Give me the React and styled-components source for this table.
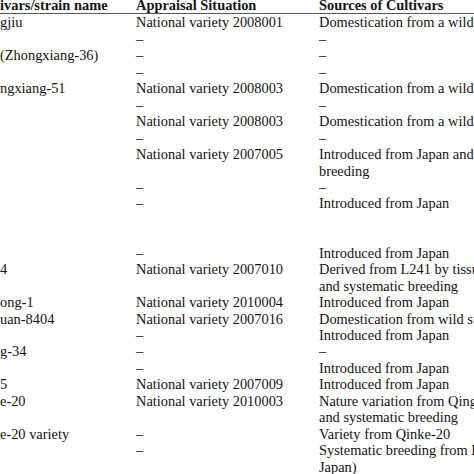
import React from "react";
import styled, { createGlobalStyle } from "styled-components";

const GlobalStyle = createGlobalStyle`
  html, body {
    margin: 0;
    padding: 0;
    background: #ffffff;
    overflow: hidden;
  }
  body {
    width: 474px;
    height: 474px;
  }
`;

const Table = styled.div`
  margin-top: -3px;
  width: 474px;
  overflow: hidden;
  font-family: "Liberation Serif", "Times New Roman", serif;
  font-size: 14.4px;
  line-height: 16.45px;
  color: #141414;
`;

const Row = styled.div`
  display: grid;
  grid-template-columns: 136px 183px 1fr;
  white-space: nowrap;
  border-bottom: ${(props) => (props.head ? "1px solid #5a5a5a" : "none")};
  font-weight: ${(props) => (props.head ? "bold" : "normal")};
`;

const Cell = styled.div`
  min-height: 16.45px;
  overflow: visible;
`;

const Line = styled.div`
  height: 16.45px;
`;

const rows = [
  ["gjiu", "National variety 2008001", ["Domestication from a wild strain"]],
  ["", "–", ["–"]],
  ["(Zhongxiang-36)", "–", ["–"]],
  ["", "–", ["–"]],
  ["ngxiang-51", "National variety 2008003", ["Domestication from a wild strain"]],
  ["", "–", ["–"]],
  ["", "National variety 2008003", ["Domestication from a wild strain"]],
  ["", "–", ["–"]],
  ["", "National variety 2007005", ["Introduced from Japan and", "breeding"]],
  ["", "–", ["–"]],
  ["", "–", ["Introduced from Japan"]],
  ["", "", [""]],
  ["", "", [""]],
  ["", "–", ["Introduced from Japan"]],
  ["4", "National variety 2007010", ["Derived from L241 by tissue", "and systematic breeding"]],
  ["ong-1", "National variety 2010004", ["Introduced from Japan"]],
  ["uan-8404", "National variety 2007016", ["Domestication from wild strain"]],
  ["", "–", ["Introduced from Japan"]],
  ["g-34", "–", ["–"]],
  ["", "–", ["Introduced from Japan"]],
  ["5", "National variety 2007009", ["Introduced from Japan"]],
  ["e-20", "National variety 2010003", ["Nature variation from Qingke", "and systematic breeding"]],
  ["e-20 variety", "–", ["Variety from Qinke-20"]],
  ["", "–", ["Systematic breeding from L", "Japan)"]],
];

export default function App() {
  return (
    <>
      <GlobalStyle />
      <Table>
        <Row head>
          <Cell>ivars/strain name</Cell>
          <Cell>Appraisal Situation</Cell>
          <Cell>Sources of Cultivars</Cell>
        </Row>
        {rows.map(([name, appraisal, sources], i) => (
          <Row key={i}>
            <Cell>{name}</Cell>
            <Cell>{appraisal}</Cell>
            <Cell>
              {sources.map((s, j) => (
                <Line key={j}>{s}</Line>
              ))}
            </Cell>
          </Row>
        ))}
      </Table>
    </>
  );
}
